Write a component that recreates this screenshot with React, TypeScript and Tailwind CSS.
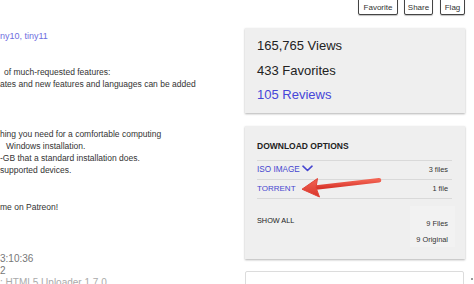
import React from "react";

export default function App() {
  return (
    <div className="relative w-[474px] h-[284px] overflow-hidden bg-white flex items-start font-['Liberation_Sans',Arial,sans-serif]">
      {/* Left column */}
      <div className="w-[245px] shrink-0 overflow-hidden whitespace-nowrap text-[8.5px] leading-[12px] text-[#333]">
        <div className="pt-[29.5px] text-[9px] text-[#6e6ee0]">ny10, tiny11</div>
        <div className="mt-[24px] pl-[4px]">of much-requested features:</div>
        <div>ates and new features and languages can be added</div>
        <div className="mt-[38px]">hing you need for a comfortable computing</div>
        <div className="pl-[6px]">Windows installation.</div>
        <div>-GB that a standard installation does.</div>
        <div>supported devices.</div>
        <div className="mt-[25.5px]">me on Patreon!</div>
        <div className="mt-[39.5px] text-[10px] text-[#777]">3:10:36</div>
        <div className="text-[10px] text-[#777]">2</div>
        <div className="text-[10px] text-[#aaa]">: HTML5 Uploader 1.7.0</div>
      </div>

      {/* Right column */}
      <div className="w-[220px] shrink-0 flex flex-col">
        <div className="shrink-0 -mt-[2px] h-[17px] flex justify-end">
          <div className="w-[40px] h-[17px] border border-[#444] rounded-[2px] bg-white text-[8px] leading-[15px] pt-[1px] text-center text-[#333] shadow-[0_1px_1px_rgba(0,0,0,0.25)]">Favorite</div>
          <div className="ml-[6px] w-[29px] h-[17px] border border-[#444] rounded-[2px] bg-white text-[8px] leading-[15px] pt-[1px] text-center text-[#333] shadow-[0_1px_1px_rgba(0,0,0,0.25)]">Share</div>
          <div className="ml-[7px] w-[25px] h-[17px] border border-[#444] rounded-[2px] bg-white text-[8px] leading-[15px] pt-[1px] text-center text-[#333] shadow-[0_1px_1px_rgba(0,0,0,0.25)]">Flag</div>
        </div>

        <div className="shrink-0 mt-[13px] h-[85px] bg-[#efefef] shadow-[0_1px_2px_rgba(0,0,0,0.3)] pt-[6px] pl-[12px] text-[13px] leading-[24.5px] text-[#222]">
          <div>165,765 Views</div>
          <div>433 Favorites</div>
          <div className="text-[#4646d8]">105 Reviews</div>
        </div>

        <div className="shrink-0 mt-[13px] h-[133px] bg-[#efefef] shadow-[0_1px_2px_rgba(0,0,0,0.3)] pl-[12px] pr-[13px]">
          <div className="pt-[14px] text-[8.5px] leading-[12px] font-bold text-[#222]">DOWNLOAD OPTIONS</div>
          <div className="mt-[8px] border-t border-[#d9d9d9]" />
          <div className="h-[19px] flex items-center justify-between pr-[4px] border-b border-[#d9d9d9]">
            <div className="flex items-center text-[8.2px] text-[#4646d0]">
              <span>ISO IMAGE</span>
              <svg width="11" height="7" viewBox="0 0 11 7" className="ml-[2px] -mt-[2px]">
                <path d="M1 1.2 L5.5 5.5 L10 1.2" fill="none" stroke="#4646d0" strokeWidth="1.6" strokeLinecap="round" strokeLinejoin="round" />
              </svg>
            </div>
            <div className="text-[7.4px] text-[#333]">3 files</div>
          </div>
          <div className="h-[19px] flex items-center justify-between pr-[4px] border-b border-[#d9d9d9]">
            <div className="text-[8px] text-[#4646d0]">TORRENT</div>
            <div className="text-[7.4px] text-[#333]">1 file</div>
          </div>
          <div className="flex justify-between">
            <div className="mt-[16.5px] text-[7.3px] leading-[10px] text-[#222]">SHOW ALL</div>
            <div className="mt-[7px] -mr-[3px] pr-[7px] pl-[6px] pt-[12.5px] pb-[2px] bg-[#f2f2f2] text-[7.4px] leading-[10px] text-[#333] text-right">
              <div>9 Files</div>
              <div className="mt-[6.5px]">9 Original</div>
            </div>
          </div>
        </div>

        <div className="shrink-0 mt-[12px] w-[219px] h-[40px] bg-white border border-[#dcdcdc] rounded-[2px]" />
      </div>

      <div className="absolute left-[471px] top-[278px] w-[2px] h-[2px] bg-[#999]" />

      {/* Red arrow */}
      <svg className="absolute left-[295px] top-[172px]" width="95" height="30" viewBox="0 0 95 30">
        <defs>
          <linearGradient id="ag" x1="0" y1="0" x2="0" y2="1">
            <stop offset="0" stopColor="#f26352" />
            <stop offset="1" stopColor="#d8352b" />
          </linearGradient>
        </defs>
        <line x1="19" y1="15.8" x2="84" y2="8.2" stroke="url(#ag)" strokeWidth="4.6" strokeLinecap="round" />
        <path d="M7 17.2 L22.5 6.5 L21 15.6 L24.5 25 Z" fill="url(#ag)" stroke="#e14438" strokeWidth="1" strokeLinejoin="round" />
      </svg>
    </div>
  );
}
